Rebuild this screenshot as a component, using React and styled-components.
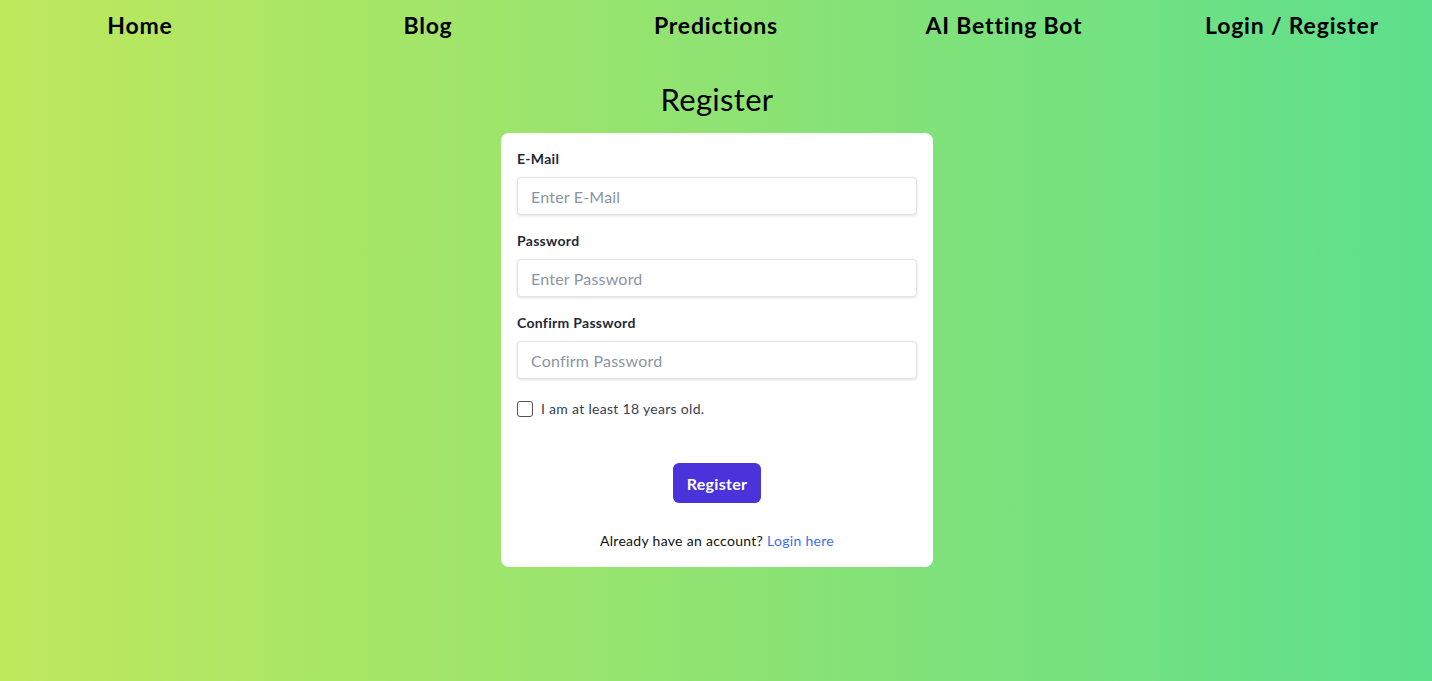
import styled, { createGlobalStyle } from "styled-components";

const GlobalStyle = createGlobalStyle`
    * {
        box-sizing: border-box;
    }

    body {
        margin: 0;
        font-family: "Lato", "Noto Sans", sans-serif;
    }
`;

const Page = styled.div`
    min-height: 100vh;
    background: linear-gradient(to right, #bfe85d, #8fe372 50%, #5ddf8d);
    color: #000;
`;

const Nav = styled.nav`
    display: grid;
    grid-template-columns: repeat(5, 288px);
    justify-content: center;
    padding-top: 11px;
`;

const NavLink = styled.a`
    text-align: center;
    font-size: 23px;
    line-height: 28px;
    font-weight: 700;
    letter-spacing: 0.8px;
    color: #000;
    text-decoration: none;
`;

const Main = styled.main`
    display: flex;
    flex-direction: column;
    align-items: center;
    padding: 42px 0 0 2px;
`;

const Title = styled.h1`
    margin: 0 0 16px;
    font-size: 31px;
    line-height: 36px;
    font-weight: 400;
    letter-spacing: 0.3px;
`;

const Card = styled.form`
    width: 432px;
    background: #fff;
    border-radius: 8px;
    padding: 16px;
    display: flex;
    flex-direction: column;
    letter-spacing: 0.3px;
`;

const Field = styled.div`
    display: flex;
    flex-direction: column;
    gap: 8px;
    margin-bottom: 16px;
`;

const Label = styled.label`
    font-size: 14px;
    line-height: 20px;
    font-weight: 700;
    color: #1f2937;
`;

const Input = styled.input`
    height: 38px;
    width: 100%;
    border: 1px solid #e1e3e8;
    border-radius: 4px;
    box-shadow: 0 1px 3px rgba(0, 0, 0, 0.12);
    padding: 0 13px;
    font-family: inherit;
    font-size: 16px;
    letter-spacing: 0.2px;
    color: #374151;

    &::placeholder {
        color: #8c94a3;
    }
`;

const CheckRow = styled.label`
    display: flex;
    align-items: center;
    gap: 8px;
    margin-top: 4px;
    font-size: 14px;
    line-height: 20px;
    color: #374151;
`;

const Check = styled.input`
    width: 16px;
    height: 16px;
    margin: 0;
    appearance: none;
    border: 1px solid #555;
    border-radius: 3px;
    background: #fff;
`;

const Button = styled.button`
    align-self: center;
    margin-top: 44px;
    width: 88px;
    height: 40px;
    border: none;
    border-radius: 6px;
    background: #4a33db;
    color: #fff;
    font-family: inherit;
    font-size: 16px;
    font-weight: 700;
    letter-spacing: 0.3px;
`;

const Footer = styled.p`
    margin: 28px 0 0;
    text-align: center;
    font-size: 14px;
    line-height: 20px;
    color: #111;
`;

const LoginLink = styled.a`
    color: #3b6ff0;
    text-decoration: none;
`;

const links = ["Home", "Blog", "Predictions", "AI Betting Bot", "Login / Register"];

const fields = [
    { id: "email", label: "E-Mail", placeholder: "Enter E-Mail", type: "email" },
    { id: "password", label: "Password", placeholder: "Enter Password", type: "password" },
    { id: "confirm", label: "Confirm Password", placeholder: "Confirm Password", type: "password" },
];

const App = () => {
    return (
        <Page>
            <GlobalStyle />
            <Nav>
                {links.map((link) => (
                    <NavLink key={link} href="#">{link}</NavLink>
                ))}
            </Nav>

            <Main>
                <Title>Register</Title>

                <Card onSubmit={(e) => e.preventDefault()}>
                    {fields.map((f) => (
                        <Field key={f.id}>
                            <Label htmlFor={f.id}>{f.label}</Label>
                            <Input id={f.id} type={f.type} placeholder={f.placeholder} />
                        </Field>
                    ))}

                    <CheckRow>
                        <Check type="checkbox" />
                        I am at least 18 years old.
                    </CheckRow>

                    <Button type="submit">Register</Button>

                    <Footer>
                        Already have an account? <LoginLink href="#">Login here</LoginLink>
                    </Footer>
                </Card>
            </Main>
        </Page>
    )
};

export default App;
